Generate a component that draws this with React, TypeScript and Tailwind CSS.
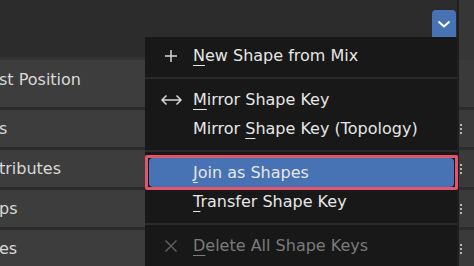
import React from "react";

const font = { fontFamily: '"DejaVu Sans", Verdana, sans-serif' };

type Row = { text: string; tall?: boolean };

const rows: Row[] = [
  { text: "st Position", tall: true },
  { text: "s" },
  { text: "tributes" },
  { text: "ps" },
  { text: "es" },
];

const Handle = () => (
  <div className="flex flex-col gap-[2px] ml-[1px]">
    <div className="w-[2px] h-[2px] bg-[#b8b8b8]" />
    <div className="w-[2px] h-[2px] bg-[#b8b8b8]" />
    <div className="w-[2px] h-[2px] bg-[#b8b8b8]" />
  </div>
);

const Sep = () => (
  <div className="flex h-[3px]">
    <div className="flex-1 bg-[#2b2b2b]" />
    <div className="w-[2px] bg-[#1e1e1e]" />
    <div className="w-[15px] bg-[#2c2c2c]" />
  </div>
);

const PlusIcon = () => (
  <svg width="14" height="14" viewBox="0 0 14 14" fill="none" stroke="#d6d6d6" strokeWidth="1.5">
    <path d="M7 1v12M1 7h12" />
  </svg>
);

const ArrowsIcon = () => (
  <svg width="23" height="12" viewBox="0 0 23 12" fill="none" stroke="#d6d6d6" strokeWidth="1.5">
    <path d="M2 6h19M6.5 1.5 2 6l4.5 4.5M16.5 1.5 21 6l-4.5 4.5" />
  </svg>
);

const CrossIcon = () => (
  <svg width="14" height="14" viewBox="0 0 14 14" fill="none" stroke="#5e5e5e" strokeWidth="1.5">
    <path d="M1.5 1.5l11 11M12.5 1.5l-11 11" />
  </svg>
);

type Item = {
  icon?: React.ReactNode;
  pre?: string;
  hot: string;
  rest: string;
  active?: boolean;
  disabled?: boolean;
};

const MenuItem = ({ icon, pre, hot, rest, active, disabled }: Item) => (
  <div
    className={`mx-[4px] mr-[3px] h-[29px] flex items-center rounded-[4px] ${
      active ? "bg-[#4772b3]" : ""
    }`}
  >
    <div className="w-[44px] flex justify-center">{icon}</div>
    <span className={disabled ? "text-[#7b7b7b]" : "text-[#e6e6e6]"}>
      {pre}
      <span className="underline decoration-1 underline-offset-[4px]">{hot}</span>
      {rest}
    </span>
  </div>
);

const MenuSep = () => (
  <div className="h-[15px] flex items-center">
    <div className="w-full h-[2px] bg-[#2a2a2a]" />
  </div>
);

export default function App() {
  return (
    <div
      className="relative w-[474px] h-[266px] overflow-hidden bg-[#2b2b2b] text-[16px] leading-none"
      style={font}
    >
      {/* top header */}
      <div className="flex h-[57px]">
        <div className="flex-1 flex justify-end items-start pr-[1px] pt-[10px] bg-[#2c2c2c]">
          <div className="w-[24px] h-[34px] bg-[#4772b3] rounded-t-[4px] flex justify-center pt-[10px]">
            <svg width="14" height="8" viewBox="0 0 14 8" fill="none" stroke="#ffffff" strokeWidth="2">
              <path d="M1.5 1.5 7 6.5l5.5-5" />
            </svg>
          </div>
        </div>
        <div className="w-[2px] bg-[#1e1e1e]" />
        <div className="w-[15px] bg-[#363636]" />
      </div>
      <div className="flex h-[3px]">
        <div className="flex-1 bg-[#333333]" />
        <div className="w-[2px] bg-[#1e1e1e]" />
        <div className="w-[15px] bg-[#363636]" />
      </div>

      {/* list rows */}
      {rows.map((r, i) => (
        <React.Fragment key={i}>
          {i > 0 && <Sep />}
          <div className={`flex ${r.tall ? "h-[47px]" : "h-[37px]"}`}>
            <div
              className={`flex-1 bg-[#3d3d3d] flex items-center text-[#d9d9d9] ${
                r.tall ? "pb-[7px]" : ""
              }`}
            >
              <span className="-ml-[1px]">{r.text}</span>
            </div>
            <div className="w-[2px] bg-[#1e1e1e]" />
            <div className="w-[15px] bg-[#3a3a3a] flex items-center">
              {!r.tall && <Handle />}
            </div>
          </div>
        </React.Fragment>
      ))}

      {/* popup menu */}
      <div className="absolute left-[145px] top-[37px] w-[312px] h-[240px] bg-[#181818] pt-[4px]">
        <MenuItem icon={<PlusIcon />} hot="N" rest="ew Shape from Mix" />
        <MenuSep />
        <MenuItem icon={<ArrowsIcon />} hot="M" rest="irror Shape Key" />
        <MenuItem pre="Mirror " hot="S" rest="hape Key (Topology)" />
        <MenuSep />
        <MenuItem hot="J" rest="oin as Shapes" active />
        <MenuItem hot="T" rest="ransfer Shape Key" />
        <MenuSep />
        <MenuItem icon={<CrossIcon />} hot="D" rest="elete All Shape Keys" disabled />

        {/* annotation outline */}
        <div className="absolute left-0 top-[118px] w-[313px] h-[35px] border-[3px] border-[#e2546a] rounded-[2px]" />
      </div>
    </div>
  );
}
